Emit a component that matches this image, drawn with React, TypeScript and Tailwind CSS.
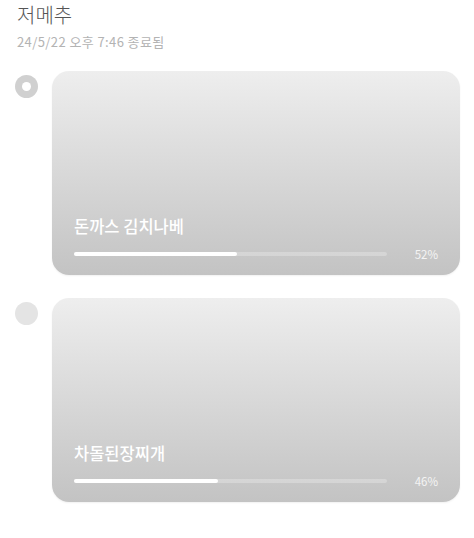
const options = [
  { name: "돈까스 김치나베", pct: 52, selected: true },
  { name: "차돌된장찌개", pct: 46, selected: false },
];

const font = { fontFamily: '"Noto Sans CJK KR", "Noto Sans", sans-serif' };

export default function App() {
  return (
    <div className="min-h-screen bg-white pl-[17px] pr-[14px]" style={font}>
      <h1 className="pt-[2px] text-[20px] font-light leading-[26px] text-[#555555]">저메추</h1>
      <p className="mt-[5px] text-[13px] leading-[18px] tracking-[0.4px] text-[#b3b3b3]">24/5/22 오후 7:46 종료됨</p>

      <div className="mt-[20px] flex flex-col gap-[23px]">
        {options.map((o) => (
          <div key={o.name} className="flex items-start gap-[14px] -ml-[2px]">
            <div className="mt-[4px] shrink-0">
              {o.selected ? (
                <div className="flex h-[23px] w-[23px] items-center justify-center rounded-full bg-[#d0d0d0]">
                  <div className="h-[9px] w-[9px] rounded-full bg-white" />
                </div>
              ) : (
                <div className="h-[23px] w-[23px] rounded-full bg-[#e4e4e4]" />
              )}
            </div>
            <div className="flex h-[204px] flex-1 flex-col justify-end rounded-[17px] bg-linear-to-b from-[#eeeeee] to-[#c3c3c3] px-[22px] pb-[14px] shadow-[0_1px_2px_rgba(0,0,0,0.06)]">
              <div className="text-[16.5px] font-medium leading-[22px] text-white">{o.name}</div>
              <div className="mt-[10px] flex items-center">
                <div className="h-[4px] w-[313px] rounded-full bg-white/25">
                  <div className="h-full rounded-full bg-white" style={{ width: `${o.pct}%` }} />
                </div>
                <span className="ml-auto text-[11.5px] leading-[14px] text-[#f4f4f4]">{o.pct}%</span>
              </div>
            </div>
          </div>
        ))}
      </div>
    </div>
  );
}
